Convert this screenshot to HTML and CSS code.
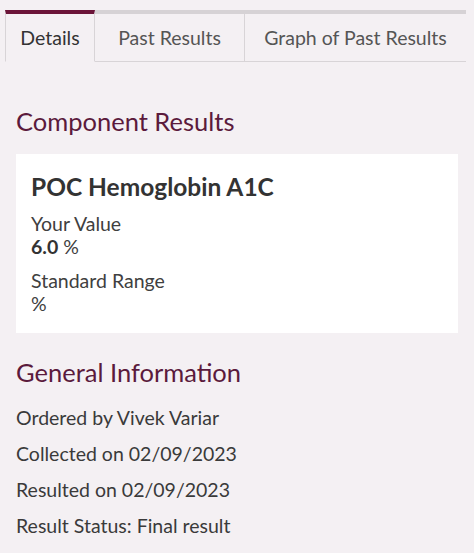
FILE: index.html
```html
<!DOCTYPE html>
<html lang="en">
<head>
<meta charset="utf-8">
<title>Test Details</title>
<link rel="stylesheet" href="styles.css">
</head>
<body>
<div class="page">
  <nav class="tabs">
    <div class="tab active">Details</div>
    <div class="tab">Past Results</div>
    <div class="tab">Graph of Past Results</div>
  </nav>

  <section class="section">
    <h2 class="heading">Component Results</h2>
    <div class="card">
      <h3 class="card-title">POC Hemoglobin A1C</h3>
      <div class="field">
        <div class="label">Your Value</div>
        <div class="value"><strong>6.0</strong> %</div>
      </div>
      <div class="field">
        <div class="label">Standard Range</div>
        <div class="value">%</div>
      </div>
    </div>
  </section>

  <section class="section">
    <h2 class="heading">General Information</h2>
    <ul class="info">
      <li>Ordered by Vivek Variar</li>
      <li>Collected on 02/09/2023</li>
      <li>Resulted on 02/09/2023</li>
      <li>Result Status: Final result</li>
    </ul>
  </section>
</div>
</body>
</html>
```

FILE: styles.css
```css
html, body {
  margin: 0;
  padding: 0;
  background: #f4f0f3;
}
body {
  font-family: Lato, "Open Sans", sans-serif;
  color: #333;
}
.page {
  padding: 10px 8px 0 5px;
}
.tabs {
  display: flex;
  border-top: 4px solid #d6d2d5;
}
.tab {
  height: 48px;
  display: flex;
  align-items: center;
  justify-content: center;
  font-size: 19.5px;
  color: #555;
  border-bottom: 1px solid #d8d4d7;
  border-right: 1px solid #d8d4d7;
  box-sizing: border-box;
}
.tab:nth-child(1) { width: 90px; }
.tab:nth-child(2) { width: 150px; }
.tab:nth-child(3) { flex: 1; border-right: none; }
.tab.active {
  color: #333;
  border-left: 1px solid #d8d4d7;
  border-bottom-color: transparent;
  margin-top: -4px;
  border-top: 4px solid #6b1438;
  height: 52px;
}
.section {
  padding: 0 8px 0 11px;
}
.heading {
  margin: 0;
  font-weight: 400;
  font-size: 25.5px;
  color: #5b1a3c;
}
.section:nth-of-type(1) .heading {
  padding-top: 44px;
  line-height: 30px;
}
.card {
  background: #fff;
  margin-top: 18px;
  padding: 18px 15px 18px;
}
.card-title {
  margin: 0 0 10px;
  font-size: 24.5px;
  font-weight: 700;
  color: #333;
  line-height: 30px;
}
.field {
  margin-bottom: 11px;
}
.field:last-child {
  margin-bottom: 0;
}
.label, .value {
  font-size: 19.5px;
  line-height: 23px;
  color: #404040;
}
.value strong {
  color: #333;
}
.section:nth-of-type(2) .heading {
  padding-top: 24px;
  line-height: 30px;
}
.info {
  list-style: none;
  margin: 13px 0 0;
  padding: 0;
}
.info li {
  font-size: 19.5px;
  line-height: 36px;
  color: #3a3a3a;
}
```
